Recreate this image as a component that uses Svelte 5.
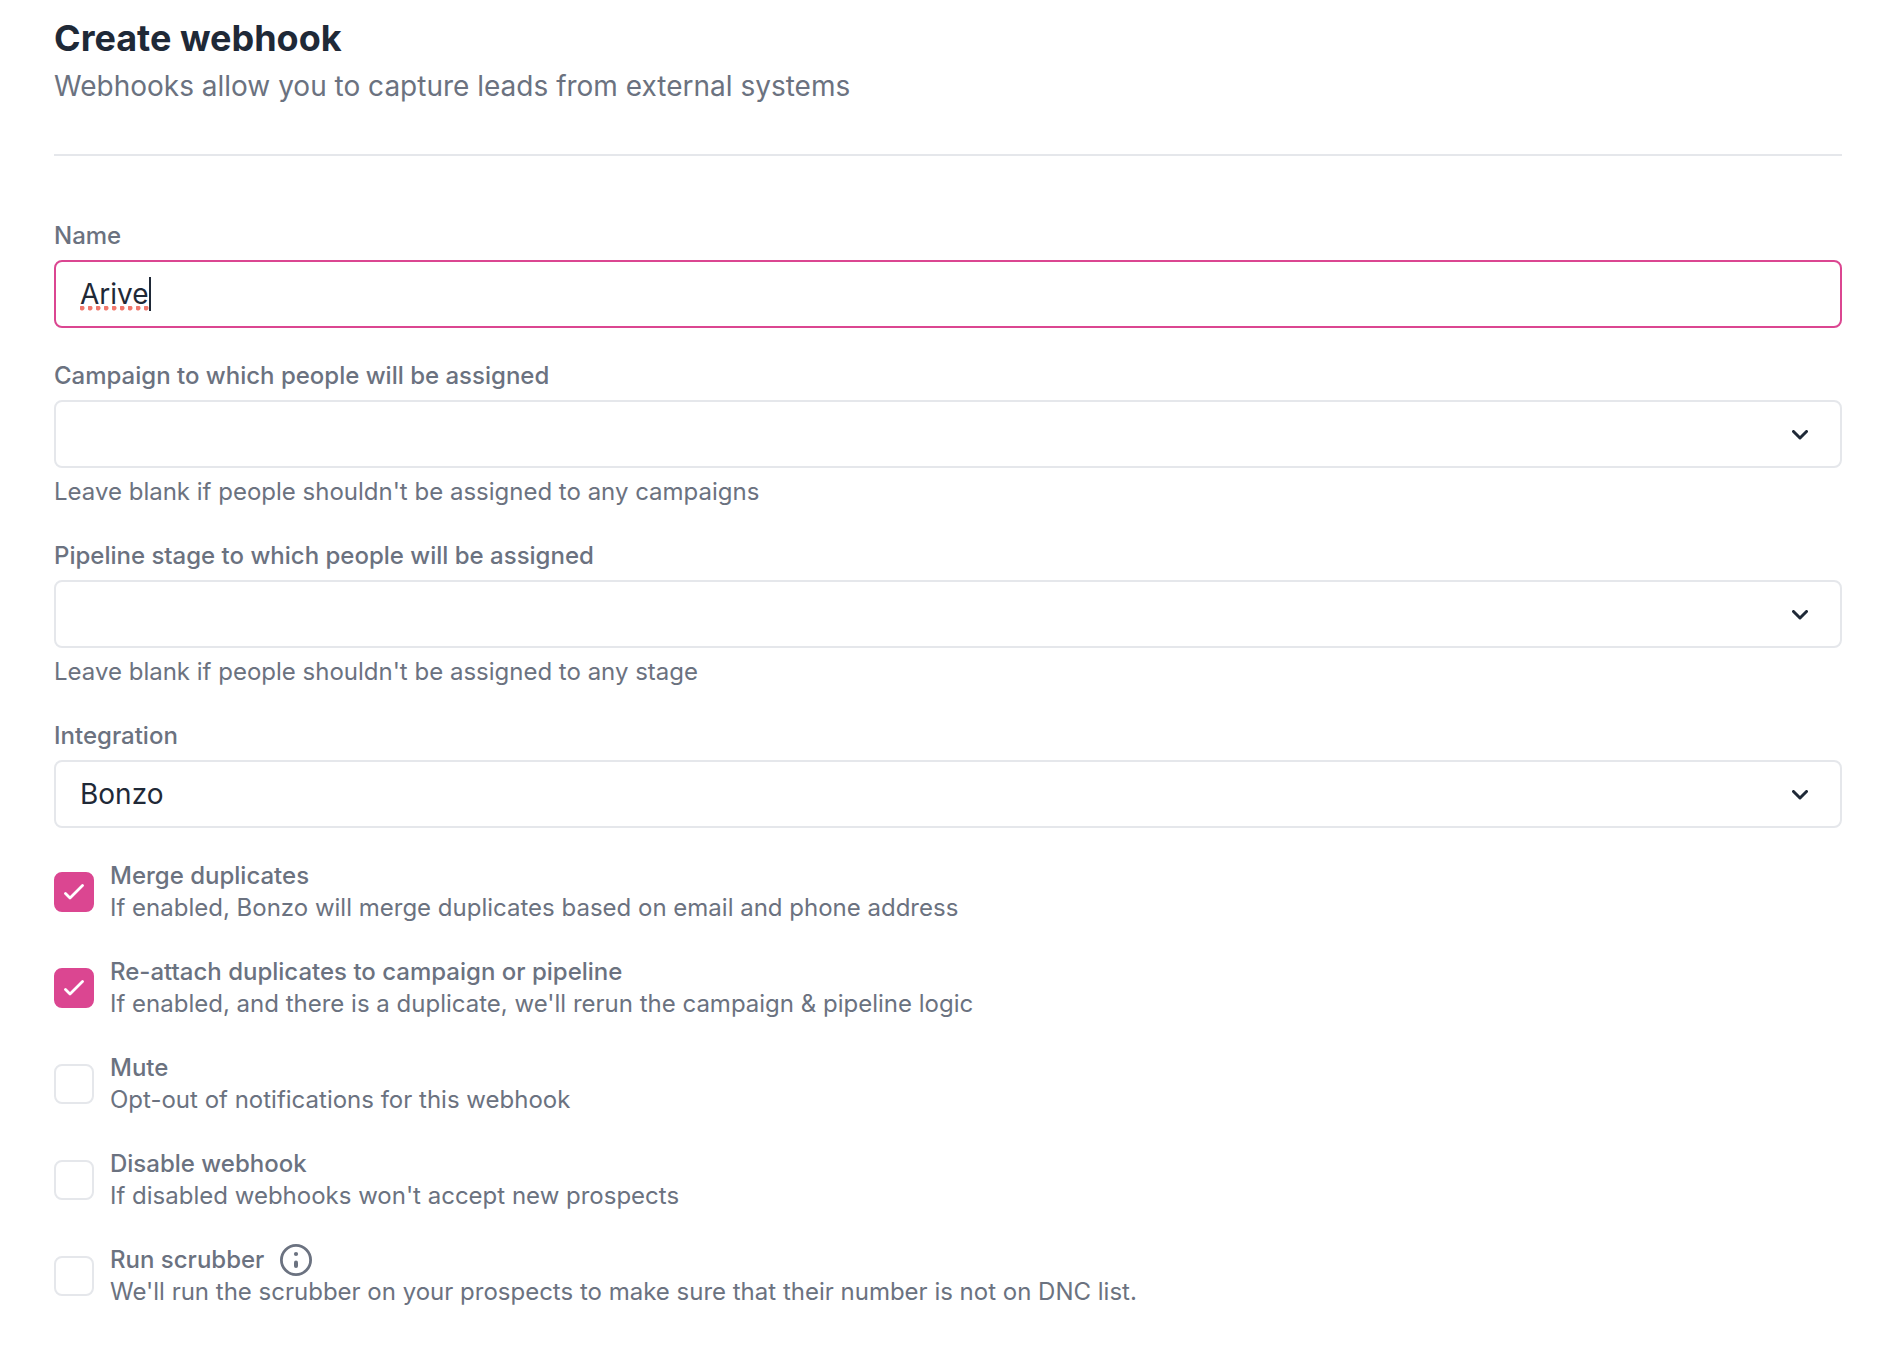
<script>
	let name = "Arive"
	let campaign = ""
	let stage = ""
	let integration = "bonzo"

	let options = [
		{id: "merge", title: "Merge duplicates", text: "If enabled, Bonzo will merge duplicates based on email and phone address", on: true},
		{id: "reattach", title: "Re-attach duplicates to campaign or pipeline", text: "If enabled, and there is a duplicate, we'll rerun the campaign & pipeline logic", on: true},
		{id: "mute", title: "Mute", text: "Opt-out of notifications for this webhook", on: false},
		{id: "disable", title: "Disable webhook", text: "If disabled webhooks won't accept new prospects", on: false},
		{id: "scrubber", title: "Run scrubber", text: "We'll run the scrubber on your prospects to make sure that their number is not on DNC list.", on: false, info: true},
	]
</script>

{#snippet chevron()}
	<svg class="chevron" viewBox="0 0 16 10" aria-hidden="true">
		<path d="M1.5 1.5 L8 8 L14.5 1.5" fill="none" stroke="currentColor" stroke-width="3" stroke-linecap="round" stroke-linejoin="round" />
	</svg>
{/snippet}

<main>
	<header>
		<h1>Create webhook</h1>
		<p>Webhooks allow you to capture leads from external systems</p>
	</header>

	<form>
		<div class="field">
			<label for="name">Name</label>
			<div class="control">
				<input id="name" class="box active" type="text" spellcheck="false" bind:value={name} />
				<!-- spelling dots and caret, sized by the typed text -->
				<div class="typed" aria-hidden="true">{name}</div>
			</div>
		</div>

		<div class="field">
			<label for="campaign">Campaign to which people will be assigned</label>
			<div class="control">
				<select id="campaign" class="box" bind:value={campaign}>
					<option value=""></option>
				</select>
				{@render chevron()}
			</div>
			<p class="hint">Leave blank if people shouldn't be assigned to any campaigns</p>
		</div>

		<div class="field">
			<label for="stage">Pipeline stage to which people will be assigned</label>
			<div class="control">
				<select id="stage" class="box" bind:value={stage}>
					<option value=""></option>
				</select>
				{@render chevron()}
			</div>
			<p class="hint">Leave blank if people shouldn't be assigned to any stage</p>
		</div>

		<div class="field">
			<label for="integration">Integration</label>
			<div class="control">
				<select id="integration" class="box" bind:value={integration}>
					<option value="bonzo">Bonzo</option>
				</select>
				{@render chevron()}
			</div>
		</div>

		{#each options as option}
			<div class="option">
				<div class="tick">
					<input id={option.id} type="checkbox" bind:checked={option.on} />
					{#if option.on}
						<svg viewBox="0 0 20 16" aria-hidden="true">
							<path d="M1.5 9.5 L6 14 L18.5 1.5" fill="none" stroke="currentColor" stroke-width="2.8" stroke-linecap="round" stroke-linejoin="round" />
						</svg>
					{/if}
				</div>
				<div class="about">
					<div class="title">
						<label for={option.id}>{option.title}</label>
						{#if option.info}
							<svg class="info" viewBox="0 0 32 32" aria-hidden="true">
								<circle cx="16" cy="16" r="14.6" fill="none" stroke="currentColor" stroke-width="2.8" />
								<circle cx="16" cy="10" r="2.1" fill="currentColor" />
								<path d="M16 18.5 V22" stroke="currentColor" stroke-width="4" stroke-linecap="round" />
							</svg>
						{/if}
					</div>
					<p>{option.text}</p>
				</div>
			</div>
		{/each}
	</form>
</main>

<style>
	:global(body) {
		margin: 0;
		background: #fff;
	}
	main {
		padding: 14px 40px 56px 54px;
		font-family: Inter, "Liberation Sans", sans-serif;
		font-size: 24px;
		line-height: 32px;
		color: #6b7280;
	}
	h1, p {
		margin: 0;
	}
	header {
		padding-bottom: 44px;
		border-bottom: 2px solid #e5e7eb;
	}
	h1 {
		font-size: 36px;
		line-height: 48px;
		font-weight: 700;
		color: #1f2937;
	}
	header p {
		font-size: 28px;
		line-height: 48px;
	}
	form {
		display: flex;
		flex-direction: column;
		gap: 32px;
		padding-top: 64px;
	}
	.field {
		display: flex;
		flex-direction: column;
		gap: 8px;
	}
	label {
		font-weight: 500;
	}
	.control {
		position: relative;
	}
	.box {
		display: block;
		box-sizing: border-box;
		width: 100%;
		height: 68px;
		margin: 0;
		padding: 0 24px;
		border: 2px solid #e5e7eb;
		border-radius: 8px;
		outline: none;
		background: #fff;
		color: #1f2937;
		font-family: inherit;
		font-size: 28px;
		appearance: none;
	}
	.box.active {
		border-color: #db4691;
	}
	.typed {
		position: absolute;
		left: 26px;
		top: 17px;
		height: 34px;
		font-size: 28px;
		color: transparent;
		border-right: 2px solid #1f2937;
		background: radial-gradient(circle at 2px 2px, #f0776c 2px, transparent 3px) left bottom / 8px 5px repeat-x;
		pointer-events: none;
	}
	.chevron {
		position: absolute;
		right: 34px;
		top: 30px;
		width: 16px;
		height: 10px;
		color: #1f2937;
		pointer-events: none;
	}
	.option {
		display: flex;
		align-items: center;
		gap: 16px;
	}
	.tick {
		display: grid;
		place-items: center;
		flex: none;
	}
	.tick > * {
		grid-area: 1 / 1;
	}
	.tick input {
		box-sizing: border-box;
		width: 40px;
		height: 40px;
		margin: 0;
		border: 2px solid #e5e7eb;
		border-radius: 8px;
		background: #fff;
		appearance: none;
	}
	.tick input:checked {
		border-color: #db4691;
		background: #db4691;
	}
	.tick svg {
		width: 20px;
		height: 16px;
		color: #fff;
		pointer-events: none;
	}
	.title {
		display: flex;
		align-items: center;
		gap: 16px;
	}
	.info {
		width: 32px;
		height: 32px;
	}
</style>
